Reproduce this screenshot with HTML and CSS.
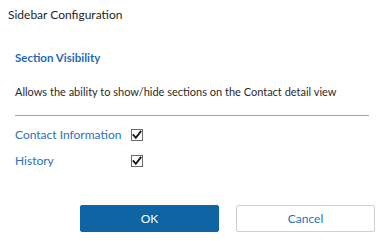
FILE: index.html
```html
<!DOCTYPE html>
<html>
<head>
<meta charset="utf-8">
<link rel="stylesheet" href="styles.css">
</head>
<body>
<div class="dialog">
  <div class="title">Sidebar Configuration</div>
  <div class="content">
    <div class="heading">Section Visibility</div>
    <div class="desc">Allows the ability to show/hide sections on the Contact detail view</div>
    <div class="divider"></div>
    <div class="rows">
      <label class="row">
        <span class="label">Contact Information</span>
        <span class="check"><svg width="10" height="10" viewBox="0 0 10 10"><path d="M1.5 5.2 L3.8 7.8 L8.6 1.6" fill="none" stroke="#1a1a1a" stroke-width="1.9" stroke-linecap="square"/></svg></span>
      </label>
      <label class="row">
        <span class="label">History</span>
        <span class="check"><svg width="10" height="10" viewBox="0 0 10 10"><path d="M1.5 5.2 L3.8 7.8 L8.6 1.6" fill="none" stroke="#1a1a1a" stroke-width="1.9" stroke-linecap="square"/></svg></span>
      </label>
    </div>
  </div>
  <div class="buttons">
    <button class="btn primary">OK</button>
    <button class="btn secondary">Cancel</button>
  </div>
</div>
</body>
</html>
```
FILE: styles.css
```css
html, body {
  margin: 0;
  padding: 0;
  background: #ffffff;
}
body {
  font-family: "Segoe UI", Lato, "Open Sans", sans-serif;
  width: 384px;
  height: 241px;
  overflow: hidden;
}
.title {
  padding: 7px 8px 0;
  font-size: 12px;
  line-height: 15px;
  color: #1e1e1e;
}
.content {
  padding: 0 15px;
}
.heading {
  margin-top: 29px;
  font-size: 11.5px;
  line-height: 14px;
  font-weight: 700;
  color: #1f6ab4;
}
.desc {
  margin-top: 20px;
  font-size: 11px;
  line-height: 14px;
  color: #2b2b2b;
}
.divider {
  margin-top: 16px;
  width: 354px;
  border-top: 1px solid #a6a6a6;
}
.rows {
  margin-top: 11px;
  display: flex;
  flex-direction: column;
  gap: 10px;
}
.row {
  display: flex;
  align-items: center;
  height: 16px;
}
.label {
  width: 116px;
  font-size: 12px;
  line-height: 16px;
  color: #2c6fbb;
}
.check {
  box-sizing: border-box;
  width: 12px;
  height: 12px;
  border: 1px solid #6a6a6a;
  background: #fff;
  display: flex;
  align-items: center;
  justify-content: center;
}
.check svg {
  display: block;
}
.buttons {
  margin-top: 36px;
  display: flex;
  justify-content: flex-end;
  gap: 17px;
  padding-right: 9px;
}
.btn {
  box-sizing: border-box;
  width: 139px;
  height: 27px;
  border-radius: 2px;
  font-family: inherit;
  font-size: 12px;
  padding: 0;
  cursor: pointer;
}
.primary {
  background: #0f64a4;
  border: 1px solid #0f64a4;
  color: #ffffff;
}
.secondary {
  background: #ffffff;
  border: 1px solid #cfcfcf;
  color: #2c6fbb;
}
```
